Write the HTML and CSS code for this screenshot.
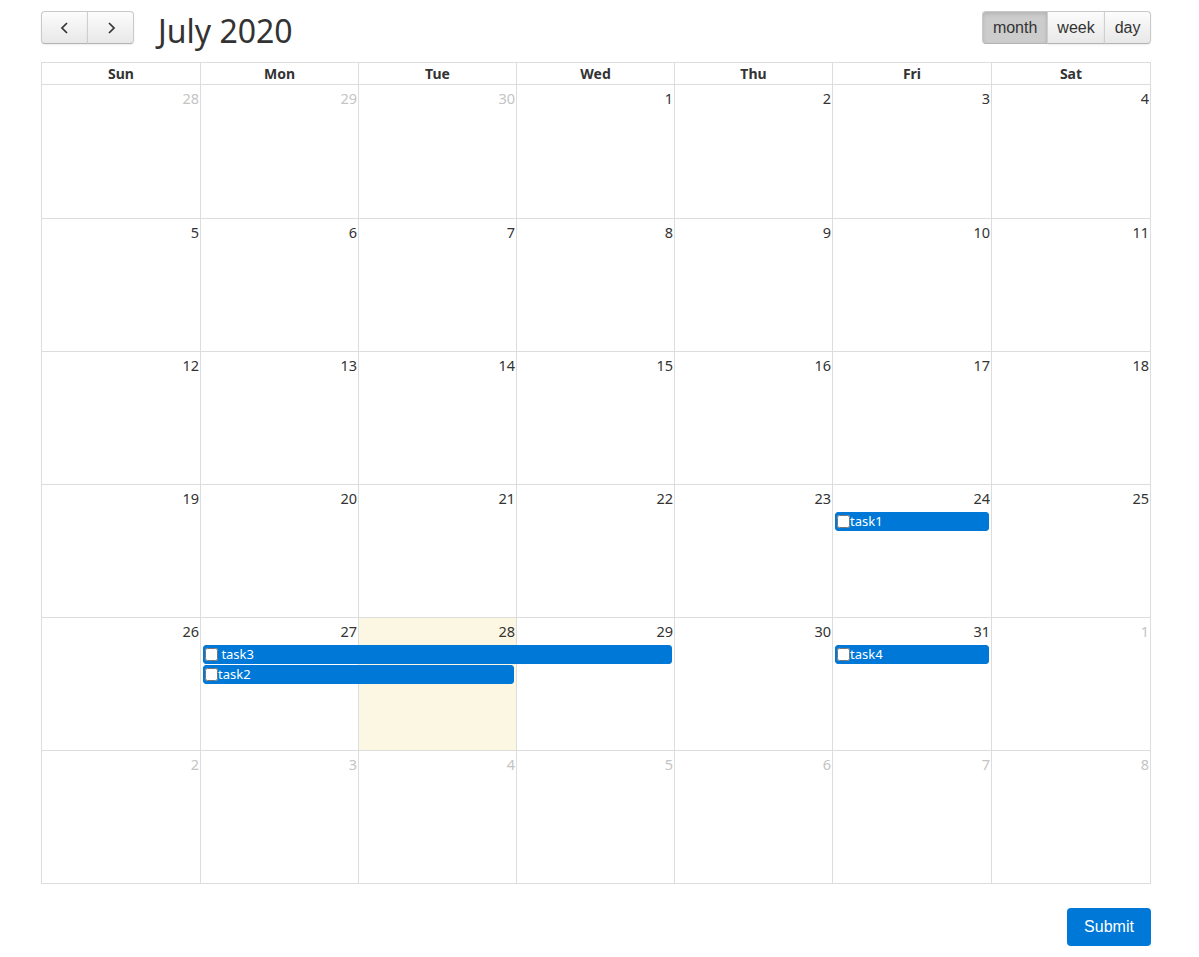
FILE: index.html
```html
<!DOCTYPE html>
<html lang="en">
<head>
    <meta charset="UTF-8">
    <title>Calendar</title>
    <link rel="stylesheet" href="styles.css">
</head>
<body>
    <div class="page">
        <div class="toolbar">
            <div class="toolbar-left">
                <div class="btn-group">
                    <button class="btn nav-btn" aria-label="prev">
                        <svg width="12" height="14" viewBox="0 0 12 14"><path d="M8 2 L3 7 L8 12" fill="none" stroke="#333" stroke-width="1.7"/></svg>
                    </button>
                    <button class="btn nav-btn" aria-label="next">
                        <svg width="12" height="14" viewBox="0 0 12 14"><path d="M4 2 L9 7 L4 12" fill="none" stroke="#333" stroke-width="1.7"/></svg>
                    </button>
                </div>
                <h2 class="title">July 2020</h2>
            </div>
            <div class="btn-group">
                <button class="btn view-btn active">month</button>
                <button class="btn view-btn">week</button>
                <button class="btn view-btn">day</button>
            </div>
        </div>

        <div class="calendar">
            <div class="day-heads">
                <div>Sun</div><div>Mon</div><div>Tue</div><div>Wed</div><div>Thu</div><div>Fri</div><div>Sat</div>
            </div>

            <div class="week first">
                <div class="day other"><span class="num">28</span></div>
                <div class="day other"><span class="num">29</span></div>
                <div class="day other"><span class="num">30</span></div>
                <div class="day"><span class="num">1</span></div>
                <div class="day"><span class="num">2</span></div>
                <div class="day"><span class="num">3</span></div>
                <div class="day"><span class="num">4</span></div>
            </div>
            <div class="week">
                <div class="day"><span class="num">5</span></div>
                <div class="day"><span class="num">6</span></div>
                <div class="day"><span class="num">7</span></div>
                <div class="day"><span class="num">8</span></div>
                <div class="day"><span class="num">9</span></div>
                <div class="day"><span class="num">10</span></div>
                <div class="day"><span class="num">11</span></div>
            </div>
            <div class="week">
                <div class="day"><span class="num">12</span></div>
                <div class="day"><span class="num">13</span></div>
                <div class="day"><span class="num">14</span></div>
                <div class="day"><span class="num">15</span></div>
                <div class="day"><span class="num">16</span></div>
                <div class="day"><span class="num">17</span></div>
                <div class="day"><span class="num">18</span></div>
            </div>
            <div class="week">
                <div class="day"><span class="num">19</span></div>
                <div class="day"><span class="num">20</span></div>
                <div class="day"><span class="num">21</span></div>
                <div class="day"><span class="num">22</span></div>
                <div class="day"><span class="num">23</span></div>
                <div class="day"><span class="num">24</span></div>
                <div class="day"><span class="num">25</span></div>
                <div class="event lane-1 fri span-1"><input type="checkbox">task1</div>
            </div>
            <div class="week">
                <div class="day"><span class="num">26</span></div>
                <div class="day"><span class="num">27</span></div>
                <div class="day today"><span class="num">28</span></div>
                <div class="day"><span class="num">29</span></div>
                <div class="day"><span class="num">30</span></div>
                <div class="day"><span class="num">31</span></div>
                <div class="day other"><span class="num">1</span></div>
                <div class="event lane-1 mon span-3"><input type="checkbox"> task3</div>
                <div class="event lane-2 mon span-2"><input type="checkbox">task2</div>
                <div class="event lane-1 fri span-1"><input type="checkbox">task4</div>
            </div>
            <div class="week">
                <div class="day other"><span class="num">2</span></div>
                <div class="day other"><span class="num">3</span></div>
                <div class="day other"><span class="num">4</span></div>
                <div class="day other"><span class="num">5</span></div>
                <div class="day other"><span class="num">6</span></div>
                <div class="day other"><span class="num">7</span></div>
                <div class="day other"><span class="num">8</span></div>
            </div>
        </div>

        <div class="actions">
            <button class="submit">Submit</button>
        </div>
    </div>
</body>
</html>
```

FILE: styles.css
```css
* {
    box-sizing: border-box;
}

body {
    margin: 0;
    font-family: "Noto Sans", "Open Sans", sans-serif;
    color: #333;
    background: #fff;
}

.page {
    padding: 11px 48px 0 41px;
}

/* toolbar */

.toolbar {
    display: flex;
    justify-content: space-between;
    align-items: flex-start;
    height: 51px;
}

.toolbar-left {
    display: flex;
    align-items: flex-start;
}

.btn-group {
    display: flex;
}

.btn {
    height: 33px;
    margin: 0;
    border: 1px solid #c9c9c9;
    border-bottom-color: #b3b3b3;
    background: linear-gradient(#fcfcfc, #e8e8e8);
    font-family: "Liberation Sans", Arial, sans-serif;
    font-size: 16px;
    color: #333;
    box-shadow: inset 0 1px 0 rgba(255, 255, 255, 0.3), 0 1px 2px rgba(0, 0, 0, 0.08);
    cursor: pointer;
}

.btn + .btn {
    border-left: 1px solid #cfcfcf;
    margin-left: -1px;
}

.btn:first-child {
    border-radius: 4px 0 0 4px;
}

.btn:last-child {
    border-radius: 0 4px 4px 0;
}

.nav-btn {
    width: 47px;
    padding: 0;
    display: flex;
    align-items: center;
    justify-content: center;
}

.view-btn {
    padding: 0 9.5px;
}

.view-btn.active {
    background: #cccccc;
    box-shadow: inset 0 2px 4px rgba(0, 0, 0, 0.12);
}

.title {
    margin: 0 0 0 24px;
    font-size: 32px;
    font-weight: 400;
    line-height: 40px;
    color: #333;
}

/* month grid */

.calendar {
    border-top: 1px solid #ddd;
    border-left: 1px solid #ddd;
}

.day-heads,
.week {
    display: grid;
    grid-template-columns: 159px 158px 158px 158px 158px 159px 159px;
}

.day-heads div {
    height: 22px;
    line-height: 21px;
    text-align: center;
    font-size: 14px;
    font-weight: bold;
    border-right: 1px solid #ddd;
    border-bottom: 1px solid #ddd;
}

.week {
    grid-template-rows: 27px 20px 20px 1fr;
    height: 133px;
}

.week.first {
    height: 134px;
}

.day {
    grid-row: 1 / -1;
    border-right: 1px solid #ddd;
    border-bottom: 1px solid #ddd;
    text-align: right;
    padding: 2px 1px 0 0;
}

.day:nth-child(1) { grid-column: 1; }
.day:nth-child(2) { grid-column: 2; }
.day:nth-child(3) { grid-column: 3; }
.day:nth-child(4) { grid-column: 4; }
.day:nth-child(5) { grid-column: 5; }
.day:nth-child(6) { grid-column: 6; }
.day:nth-child(7) { grid-column: 7; }

.num {
    font-size: 14.5px;
    line-height: 20px;
}

.day.other .num {
    color: #c4c4c4;
}

.day.today {
    background: #fcf7e3;
}

/* events */

.event {
    height: 19px;
    margin: 0 3px 1px 2px;
    background: #0078d7;
    border: 1px solid #0078d7;
    border-radius: 3px;
    color: #fff;
    font-size: 13px;
    line-height: 17px;
    display: flex;
    align-items: center;
    white-space: pre;
    z-index: 1;
}

.event input {
    width: 13px;
    height: 13px;
    margin: 0 0 0 1px;
}

.lane-1 { grid-row: 2; }
.lane-2 { grid-row: 3; }

.mon { grid-column-start: 2; }
.fri { grid-column-start: 6; }

.span-1 { grid-column-end: span 1; }
.span-2 { grid-column-end: span 2; }
.span-3 { grid-column-end: span 3; }

/* footer */

.actions {
    display: flex;
    justify-content: flex-end;
    padding-top: 24px;
}

.submit {
    width: 84px;
    height: 38px;
    border: none;
    border-radius: 4px;
    background: #0078d7;
    color: #fff;
    font-family: "Liberation Sans", Arial, sans-serif;
    font-size: 16px;
    cursor: pointer;
}
```
